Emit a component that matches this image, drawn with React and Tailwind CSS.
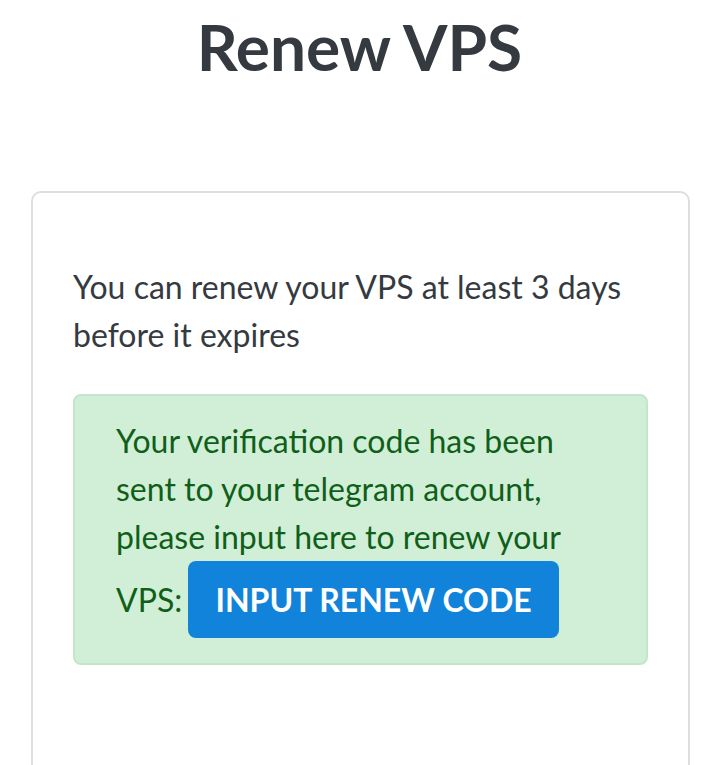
export default function App() {
  return (
    <div
      className="min-h-screen bg-white text-[#343a40]"
      style={{ fontFamily: "Lato, 'Noto Sans', sans-serif" }}
    >
      <h1 className="pt-[1px] text-center text-[64px] font-bold leading-[92px]">
        Renew VPS
      </h1>

      <div className="ml-[31px] mr-[29px] mt-[98px] min-h-[620px] rounded-[10px] border-2 border-[#dedede] px-[40px] pt-[70px]">
        <p className="text-[32px] leading-[48px]">
          You can renew your VPS at least 3 days before it expires
        </p>

        <div className="mt-[35px] rounded-[8px] border-2 border-[#c3e6cb] bg-[#d1efd6] pb-[25px] pl-[41px] pr-[41px] pt-[21px] text-[32px] leading-[48px] text-[#0f5f1a]">
          Your verification code has been sent to your telegram account, please
          input here to renew your VPS:{" "}
          <button className="ml-[-2px] inline-block rounded-[8px] bg-[#1283da] px-[27px] py-[14px] text-[32px] font-bold uppercase leading-[49px] text-white">
            Input Renew Code
          </button>
        </div>
      </div>
    </div>
  );
}
